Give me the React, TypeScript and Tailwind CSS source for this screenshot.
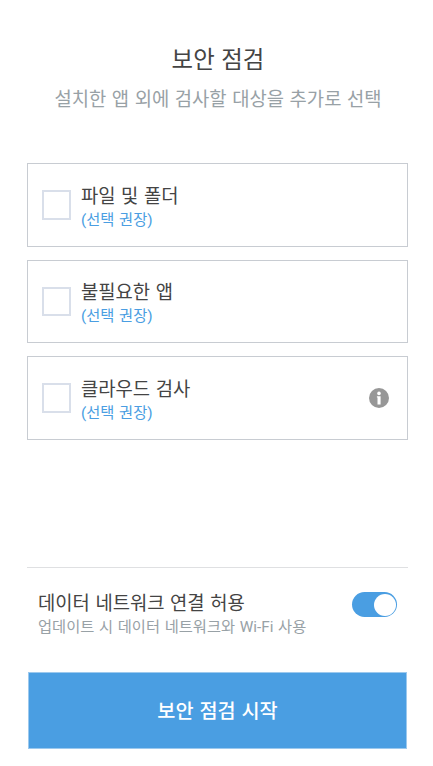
type ScanOption = { title: string; info?: boolean };

const options: ScanOption[] = [
  { title: '파일 및 폴더' },
  { title: '불필요한 앱' },
  { title: '클라우드 검사', info: true },
];

function InfoIcon() {
  return (
    <svg className="h-5 w-5 shrink-0" viewBox="0 0 20 20">
      <circle cx="10" cy="10" r="10" fill="#979797" />
      <circle cx="10" cy="5.4" r="1.8" fill="#fff" />
      <path d="M7.9 8.2h3.7v8.2H8.5V9.5h-.6z" fill="#fff" />
    </svg>
  );
}

function OptionCard({ title, info }: ScanOption) {
  return (
    <div className="flex h-[83.5px] items-center border border-[#c8ccd2] pr-[18px] pl-[14px]">
      <div className="h-[29.5px] w-[29px] shrink-0 border-2 border-[#d9dfea]" />
      <div className="ml-[10px] flex-1 pt-[5px]">
        <div className="text-[18.8px] leading-[26px] text-[#444]">{title}</div>
        <div className="-mt-[1px] text-[15.3px] leading-[22px] text-[#4a9ee2]">(선택 권장)</div>
      </div>
      {info && <InfoIcon />}
    </div>
  );
}

export default function App() {
  return (
    <div className="flex h-[766px] w-[433px] flex-col bg-white pr-[25px] pl-[27px] [word-spacing:0.9px] whitespace-nowrap font-[Roboto,'Noto_Sans_CJK_KR',sans-serif]">
      <header className="mt-[43px] pl-[1px] text-center">
        <h1 className="text-[23.4px] leading-[34px] text-[#444]">보안 점검</h1>
        <p className="mt-[9px] text-[18.8px] leading-[28px] text-[#98a1a6]">
          설치한 앱 외에 검사할 대상을 추가로 선택
        </p>
      </header>
      <div className="mt-[49px] flex flex-col gap-[13px]">
        {options.map((o) => (
          <OptionCard key={o.title} {...o} />
        ))}
      </div>
      <div className="mt-[127px] flex items-start justify-between border-t border-[#dfe0e2] pt-[22px] pr-[11px] pl-[11px]">
        <div>
          <div className="pt-[1px] text-[18.8px] leading-[27px] text-[#444]">
            데이터 네트워크 연결 허용
          </div>
          <div className="-mt-[2px] text-[15.3px] leading-[22px] text-[#98a1a6]">
            업데이트 시 데이터 네트워크와 Wi-Fi 사용
          </div>
        </div>
        <div className="mt-[2.5px] flex h-[25px] w-[45px] items-center justify-end rounded-full bg-[#4a9ee2] pr-[1px]">
          <div className="h-[22px] w-[22px] rounded-full bg-white" />
        </div>
      </div>
      <button className="mt-[34px] mr-[1px] ml-[1px] h-[77px] border border-[#9cc9ee] bg-[#4a9ee2] pt-[4px] text-[19.7px] leading-[28px] font-medium [word-spacing:0.9px] text-white">
        보안 점검 시작
      </button>
    </div>
  );
}
